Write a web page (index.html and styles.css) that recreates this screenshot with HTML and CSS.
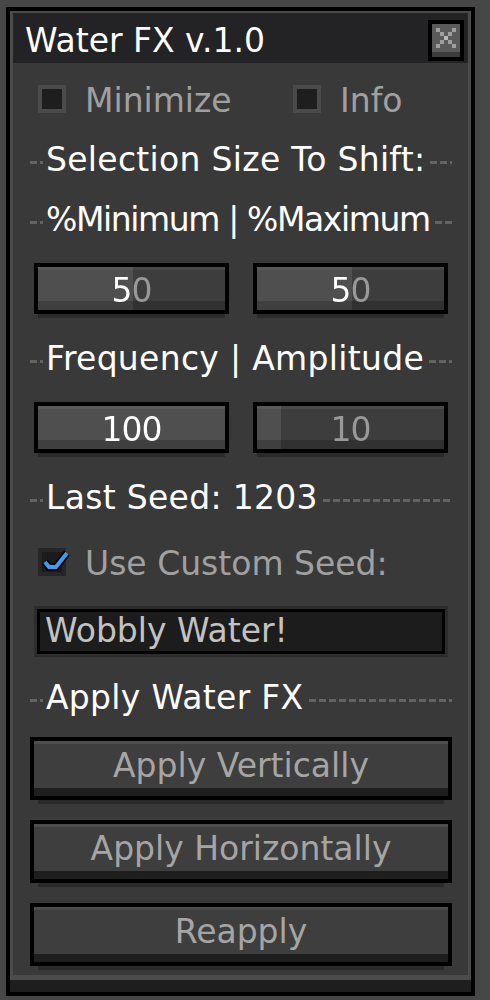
FILE: index.html
```html
<!DOCTYPE html>
<html lang="en">
<head>
    <meta charset="UTF-8">
    <title>Water FX v.1.0</title>
    <link rel="stylesheet" href="styles.css">
</head>
<body>
    <div class="dialog">
      <div class="frame">
        <div class="titlebar">
            <span class="title">Water FX v.1.0</span>
            <button class="close" type="button">
                <svg width="20" height="20" viewBox="0 0 20 20">
                    <rect x="0" y="0" width="4" height="4"/>
                    <rect x="4" y="4" width="4" height="4"/>
                    <rect x="8" y="8" width="4" height="4" class="mid"/>
                    <rect x="12" y="12" width="4" height="4"/>
                    <rect x="16" y="16" width="4" height="4"/>
                    <rect x="16" y="0" width="4" height="4"/>
                    <rect x="12" y="4" width="4" height="4"/>
                    <rect x="4" y="12" width="4" height="4"/>
                    <rect x="0" y="16" width="4" height="4"/>
                </svg>
            </button>
        </div>

        <div class="content">
            <div class="check-row">
                <label class="check"><span class="box"></span><span>Minimize</span></label>
                <label class="check"><span class="box"></span><span>Info</span></label>
            </div>

            <div class="sep">Selection Size To Shift:</div>
            <div class="sep sep-tight">%Minimum | %Maximum</div>

            <div class="slider-row">
                <div class="slider" style="--v:51%"><span class="slider-num">50</span></div>
                <div class="slider" style="--v:51%"><span class="slider-num">50</span></div>
            </div>

            <div class="sep">Frequency | Amplitude</div>

            <div class="slider-row">
                <div class="slider" style="--v:100%"><span class="slider-num">100</span></div>
                <div class="slider" style="--v:13%"><span class="slider-num">10</span></div>
            </div>

            <div class="sep">Last Seed: 1203</div>

            <div class="check-row">
                <label class="check">
                    <span class="box checked">
                        <svg width="34" height="30" viewBox="0 0 34 30">
                            <polyline class="tick-edge" points="7,15 11,20 18,20 29,6"/>
                            <polyline class="tick" points="7,15 11,20 18,20 29,6"/>
                        </svg>
                    </span>
                    <span>Use Custom Seed:</span>
                </label>
            </div>

            <div class="field">
                <input type="text" value="Wobbly Water!">
            </div>

            <div class="sep">Apply Water FX</div>

            <button class="btn" type="button">Apply Vertically</button>
            <button class="btn" type="button">Apply Horizontally</button>
            <button class="btn" type="button">Reapply</button>
        </div>
      </div>
    </div>
</body>
</html>
```

FILE: styles.css
```css
html {
    background: #474747;
}
body {
    margin: 0;
    font-family: "DejaVu Sans", "Liberation Sans", sans-serif;
    font-size: 33px;
    color: #fff;
}

.dialog {
    width: 469px;
    height: 989px;
    box-sizing: border-box;
    margin: 7px 0 0 6px;
    border: 4px solid #000;
    background: #1e1e1e;
}
.frame {
    height: 969px;
    box-sizing: border-box;
    border: 3px solid #4b4b4b;
    border-top-width: 2px;
    border-bottom-width: 5px;
    background: #393939;
}

/* title bar */
.titlebar {
    display: flex;
    align-items: flex-start;
    height: 50px;
    background: #232325;
}
.title {
    margin: 3px 0 0 12px;
    line-height: 50px;
    white-space: nowrap;
}
.close {
    display: flex;
    align-items: center;
    justify-content: center;
    width: 36px;
    height: 41px;
    box-sizing: border-box;
    margin: 7px 4px 0 auto;
    padding: 0 0 5px;
    border: 4px solid #000;
    background: #5a5a5a;
    box-shadow: inset 0 -5px #3c3c3c;
}
.close rect {
    fill: #9e9e9e;
}
.close rect.mid {
    fill: #b8b8b8;
}

/* body */
.content {
    display: flex;
    flex-direction: column;
    padding: 14px 16px 0 17px;
}

.check-row {
    display: grid;
    grid-template-columns: 255px auto;
    height: 40px;
    padding-left: 8px;
}
.check {
    display: flex;
    align-items: center;
    gap: 19px;
    color: #a0a0a0;
    line-height: 40px;
    white-space: nowrap;
}
.check span:last-child {
    margin-top: 4px;
}
.box {
    position: relative;
    width: 28px;
    height: 28px;
    box-sizing: border-box;
    flex: none;
    border: 4px solid #4a4a4a;
    background: #1e1e1e;
}
.box.checked {
    border-color: #262626;
    background: #1b1b1b;
}
.box svg {
    position: absolute;
    left: -4px;
    top: -5px;
}
.tick-edge {
    fill: none;
    stroke: #000;
    stroke-width: 7.5;
}
.tick {
    fill: none;
    stroke: #3a9cf2;
    stroke-width: 4;
}

/* separators */
.sep {
    display: flex;
    align-items: center;
    gap: 3px;
    height: 40px;
    margin-top: 23px;
    line-height: 40px;
    letter-spacing: 0.3px;
    white-space: nowrap;
}
.sep::before,
.sep::after {
    content: "";
    height: 3px;
    margin-top: 4px;
    background: repeating-linear-gradient(90deg, #636363 0 7px, transparent 7px 10px);
}
.sep::before {
    width: 13px;
    flex: none;
}
.sep::after {
    flex: 1;
    margin-left: 2px;
}
.sep-tight {
    letter-spacing: -1.4px;
}
.sep + .sep {
    margin-top: 20px;
}
.slider-row + .sep {
    margin-top: 25px;
}
.sep + .check-row {
    margin-top: 22px;
}

/* sliders */
.slider-row {
    display: flex;
    gap: 24px;
    margin-top: 23px;
    padding: 0 4px;
}
.slider {
    flex: 1;
    height: 51px;
    box-sizing: border-box;
    border: 4px solid #000;
    background:
        linear-gradient(to bottom, rgba(255, 255, 255, .06) 0 3px, transparent 3px calc(100% - 9px), rgba(0, 0, 0, .2) calc(100% - 9px)),
        linear-gradient(90deg, #4f4f4f var(--v), #3d3d3d var(--v));
    box-shadow: 0 8px 0 -4px #2a2a2a;
}
.slider-num {
    display: block;
    padding-top: 4px;
    line-height: 39px;
    letter-spacing: -1px;
    text-align: center;
    background: linear-gradient(90deg, #fff var(--v), #999 var(--v));
    -webkit-background-clip: text;
    background-clip: text;
    color: transparent;
}

/* text field */
.field {
    margin: 26px 4px 0;
    border: 3px solid #2c2c2c;
}
.field input {
    display: block;
    width: 100%;
    height: 45px;
    box-sizing: border-box;
    margin: 0;
    padding: 0 5px 3px;
    border: 3px solid #000;
    background: #1c1c1c;
    color: #c2c2c2;
    font: inherit;
    outline: none;
}
.field + .sep {
    margin-top: 21px;
}

/* buttons */
.btn {
    display: block;
    width: 100%;
    height: 63px;
    margin-top: 20px;
    padding: 2px 0 8px;
    border: 4px solid #000;
    background: #3e3e3e;
    box-shadow: inset 0 3px #4d4d4d, inset 0 -8px #1e1e1e, 0 12px 0 -8px #2a2a2a;
    color: #a5a5a5;
    font: inherit;
    line-height: 44px;
    white-space: nowrap;
}
.sep + .btn {
    margin-top: 19px;
}
```
